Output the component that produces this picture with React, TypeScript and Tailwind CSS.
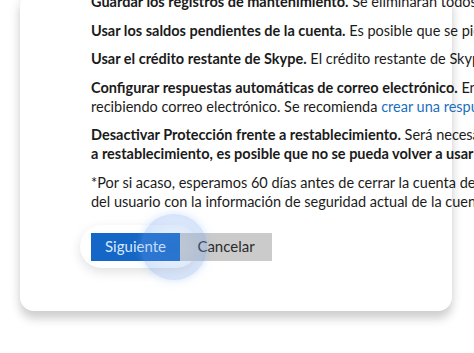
import React from 'react';

const items = [
  { bold: 'Guardar los registros de mantenimiento.', rest: ' Se eliminarán todos los registros.' },
  { bold: 'Usar los saldos pendientes de la cuenta.', rest: ' Es posible que se pierdan.' },
  { bold: 'Usar el crédito restante de Skype.', rest: ' El crédito restante de Skype se perderá.' },
];

export default function App() {
  return (
    <div className="w-[474px] h-[353px] overflow-hidden bg-white pt-[12px] pl-[20px] font-['Lato',sans-serif] text-[14.5px] text-[#1b1b1b]">
      <div className="relative w-[432px] h-[319px] rounded-[14px] bg-white shadow-[0_8px_10px_rgba(0,0,0,0.17),0_0_14px_rgba(0,0,0,0.06)]">
        <div className="-mt-[20px] pl-[71px] flex flex-col gap-[9.5px] leading-[19px] whitespace-nowrap">
          {items.map((it, i) => (
            <p key={i}>
              <b className="font-bold">{it.bold}</b>
              {it.rest}
            </p>
          ))}
          <p>
            <b className="font-bold">Configurar respuestas automáticas de correo electrónico.</b> En cuanto deje de
            <br />
            recibiendo correo electrónico. Se recomienda <a className="text-[#1a6fbf]">crear una respuesta automática</a>
          </p>
          <p>
            <b className="font-bold">Desactivar Protección frente a restablecimiento.</b> Será necesario
            <br />
            <b className="font-bold">a restablecimiento, es posible que no se pueda volver a usar</b>
          </p>
          <p>
            *Por si acaso, esperamos 60 días antes de cerrar la cuenta definitivamente
            <br />
            del usuario con la información de seguridad actual de la cuenta.
          </p>
        </div>

        <div className="relative ml-[71px] mt-[22px] flex">
          {/* lifted pill behind the primary button */}
          <div className="absolute -left-[11px] -top-[8px] w-[118px] h-[43px] rounded-full bg-white shadow-[0_4px_12px_rgba(0,0,0,0.12)]" />
          <button className="relative z-10 w-[89px] h-[28px] bg-[#1467c6] text-[#dbe9fc] text-[15px]">Siguiente</button>
          <button className="relative w-[92px] h-[28px] bg-[#cbcbcb] text-[#2b2b2b] text-[15px]">Cancelar</button>
          {/* focus glow */}
          <div className="absolute z-20 left-[50px] -top-[19px] w-[66px] h-[66px] rounded-full shadow-[0_0_10px_rgba(130,180,245,0.35)] bg-[radial-gradient(circle,rgba(140,185,245,0.16)_0%,rgba(110,160,240,0.28)_68%,rgba(100,150,240,0.38)_80%,rgba(120,170,245,0.12)_92%,rgba(120,170,245,0)_100%)]" />
        </div>
      </div>
    </div>
  );
}
